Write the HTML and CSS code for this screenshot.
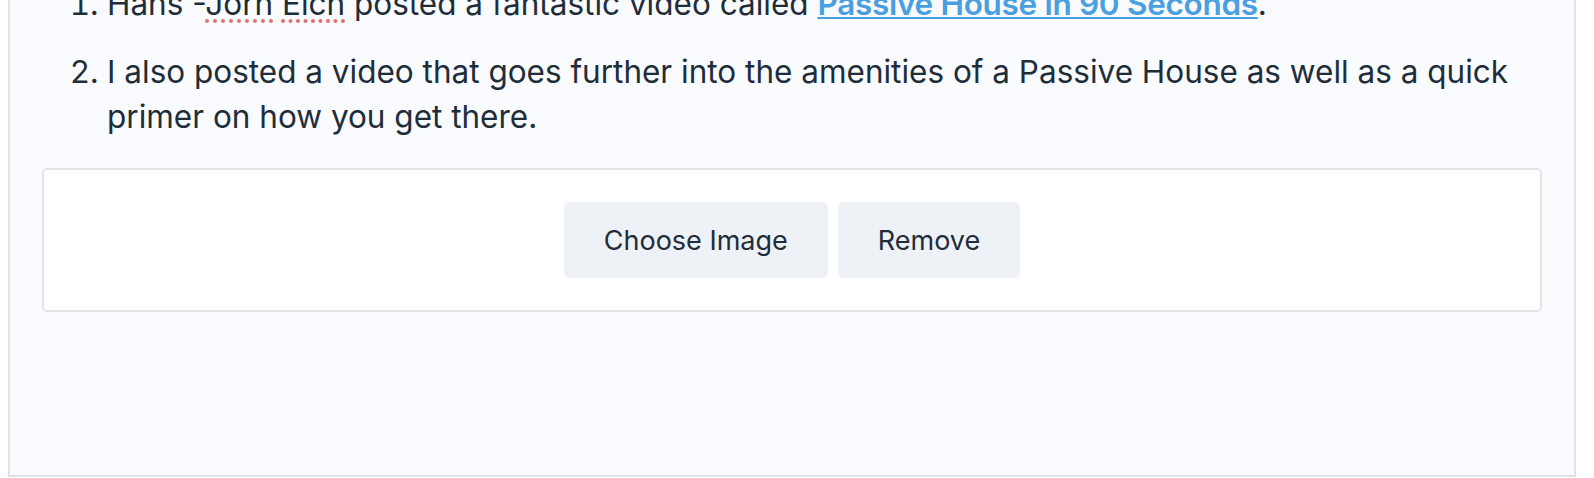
FILE: index.html
```html
<!DOCTYPE html>
<html lang="en">
<head>
<meta charset="utf-8">
<title>Editor</title>
<link rel="stylesheet" href="styles.css">
</head>
<body>
<div class="panel">
  <ol class="list">
    <li><span>Hans -</span><span class="spell">Jörn</span> <span class="spell">Eich</span> posted a fantastic video called <a class="link" href="#">Passive House in 90 Seconds</a>.</li>
    <li>I also posted a video that goes further into the amenities of a Passive House as well as a quick primer on how you get there.</li>
  </ol>
  <div class="image-box">
    <button class="btn" type="button">Choose Image</button>
    <button class="btn" type="button">Remove</button>
  </div>
</div>
</body>
</html>
```
FILE: styles.css
```css
html, body {
  margin: 0;
  padding: 0;
  background: #ffffff;
  overflow: hidden;
}
body {
  padding: 0 18px 0 8px;
  font-family: Inter, "Noto Sans", sans-serif;
  color: #1f2d3a;
}
.panel {
  margin-top: -21px;
  background: #f9fbfe;
  border: 2px solid #dde3e9;
  padding: 0 32px 163px 32px;
}
.list {
  margin: 0;
  padding: 0 0 0 65px;
  font-size: 31.5px;
  line-height: 45px;
}
.list li {
  margin-bottom: 23px;
}
.list li:last-child {
  margin-bottom: 0;
}
.spell {
  text-decoration: underline dotted #e5706b;
  text-decoration-thickness: 4px;
  text-underline-offset: 4px;
}
.link {
  color: #4a9fe0;
  font-weight: 600;
  letter-spacing: -0.3px;
  text-decoration: underline;
  text-decoration-thickness: 2px;
  text-underline-offset: 2px;
}
.image-box {
  margin-top: 29px;
  background: #ffffff;
  border: 2px solid #e0e5ea;
  border-radius: 5px;
  padding: 32px 0;
  display: flex;
  justify-content: center;
  gap: 10px;
}
.btn {
  height: 76px;
  padding: 0 40px;
  border: none;
  border-radius: 5px;
  background: #eef1f5;
  color: #1f2d3a;
  font-family: Inter, "Noto Sans", sans-serif;
  font-size: 27px;
  display: flex;
  align-items: center;
  justify-content: center;
}
```
